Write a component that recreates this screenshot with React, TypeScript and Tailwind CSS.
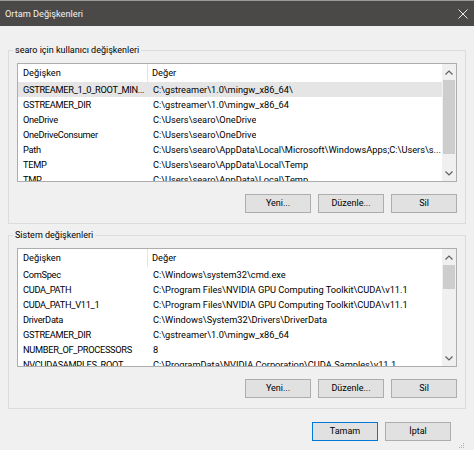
import React from "react";

type Row = { name: string; value: string; selected?: boolean };

const userVars: Row[] = [
  { name: "GSTREAMER_1_0_ROOT_MIN...", value: "C:\\gstreamer\\1.0\\mingw_x86_64\\", selected: true },
  { name: "GSTREAMER_DIR", value: "C:\\gstreamer\\1.0\\mingw_x86_64" },
  { name: "OneDrive", value: "C:\\Users\\searo\\OneDrive" },
  { name: "OneDriveConsumer", value: "C:\\Users\\searo\\OneDrive" },
  { name: "Path", value: "C:\\Users\\searo\\AppData\\Local\\Microsoft\\WindowsApps;C:\\Users\\s..." },
  { name: "TEMP", value: "C:\\Users\\searo\\AppData\\Local\\Temp" },
  { name: "TMP", value: "C:\\Users\\searo\\AppData\\Local\\Temp" },
];

const systemVars: Row[] = [
  { name: "ComSpec", value: "C:\\Windows\\system32\\cmd.exe" },
  { name: "CUDA_PATH", value: "C:\\Program Files\\NVIDIA GPU Computing Toolkit\\CUDA\\v11.1" },
  { name: "CUDA_PATH_V11_1", value: "C:\\Program Files\\NVIDIA GPU Computing Toolkit\\CUDA\\v11.1" },
  { name: "DriverData", value: "C:\\Windows\\System32\\Drivers\\DriverData" },
  { name: "GSTREAMER_DIR", value: "C:\\gstreamer\\1.0\\mingw_x86_64" },
  { name: "NUMBER_OF_PROCESSORS", value: "8" },
  { name: "NVCUDASAMPLES_ROOT", value: "C:\\ProgramData\\NVIDIA Corporation\\CUDA Samples\\v11.1" },
];

function Chevron({ up }: { up?: boolean }) {
  return (
    <svg width="8" height="5" viewBox="0 0 8 5">
      <polyline
        points={up ? "0.5,4.5 4,1 7.5,4.5" : "0.5,0.5 4,4 7.5,0.5"}
        fill="none"
        stroke="#606060"
        strokeWidth="1.2"
      />
    </svg>
  );
}

function VarList({ rows, thumb }: { rows: Row[]; thumb: string }) {
  return (
    <div className="mt-[5px] flex h-[119px] border border-[#adadad] bg-white text-[9.25px]">
      <div className="min-w-0 flex-1 overflow-hidden">
        {/* header */}
        <div className="flex h-[18px] items-center">
          <div className="h-full w-[130px] shrink-0 border-r border-[#e5e5e5] pl-[5px] leading-[18px]">Değişken</div>
          <div className="pl-[4px]">Değer</div>
        </div>
        {rows.map((r, i) => (
          <div
            key={i}
            className={`flex h-[15px] items-center whitespace-nowrap leading-[15px] ${r.selected ? "bg-[#e5e5e5]" : ""}`}
          >
            <div className="w-[131px] shrink-0 overflow-hidden pl-[5px] tracking-[-0.3px]">{r.name}</div>
            <div className="min-w-0 overflow-hidden pl-[4px]">{r.value}</div>
          </div>
        ))}
      </div>
      {/* scrollbar */}
      <div className="flex w-[14px] shrink-0 flex-col bg-[#f0f0f0]">
        <div className="flex h-[16px] items-center justify-center">
          <Chevron up />
        </div>
        <div className={`mx-[1px] bg-[#cdcdcd] ${thumb}`} />
        <div className="flex-1" />
        <div className="flex h-[16px] items-center justify-center">
          <Chevron />
        </div>
      </div>
    </div>
  );
}

function Button({ label, primary }: { label: string; primary?: boolean }) {
  return (
    <button
      className={`flex h-[19px] w-[66px] items-center justify-center border bg-[#e1e1e1] leading-none ${
        primary ? "border-[#0078d7]" : "border-[#adadad]"
      }`}
    >
      {label}
    </button>
  );
}

function Group({ title, rows, thumb }: { title: string; rows: Row[]; thumb: string }) {
  return (
    <fieldset className="min-w-0 border border-[#dcdcdc] px-2 pb-[10px]">
      <legend className="ml-[-4px] px-[2px] leading-[16px]">{title}</legend>
      <VarList rows={rows} thumb={thumb} />
      <div className="mt-[12px] flex justify-end gap-[7px]">
        <Button label="Yeni..." />
        <Button label="Düzenle..." />
        <Button label="Sil" />
      </div>
    </fieldset>
  );
}

export default function App() {
  return (
    <div
      className="flex h-[450px] w-[474px] flex-col overflow-hidden bg-[#f0f0f0] text-[9px] text-black"
      style={{ fontFamily: 'Roboto, "Noto Sans", sans-serif' }}
    >
      <div className="flex h-[26px] shrink-0 items-center justify-between border-t border-[#9a9a9a] bg-[#4a4947] pl-[5px] pr-[6px] text-[#f2f2f2]">
        <span className="text-[9.2px]">Ortam Değişkenleri</span>
        <svg width="10" height="10" viewBox="0 0 10 10">
          <path d="M0.5 0.5 L9.5 9.5 M9.5 0.5 L0.5 9.5" stroke="#e8e8e8" strokeWidth="1" />
        </svg>
      </div>

      <div className="flex min-h-0 flex-1 flex-col px-2 pt-4">
        <Group title="searo için kullanıcı değişkenleri" rows={userVars} thumb="h-[74px]" />
        <div className="mt-[3px]">
          <Group title="Sistem değişkenleri" rows={systemVars} thumb="h-[24px]" />
        </div>

        <div className="mt-[13px] flex items-start justify-end gap-[7px] pr-[15px]">
          <Button label="Tamam" primary />
          <Button label="İptal" />
        </div>
        <div className="flex flex-1 items-end justify-end">
          <svg width="6" height="6" viewBox="0 0 6 6" className="mb-[1px] mr-[1px]">
            <rect x="4" y="0" width="1" height="1" fill="#b0b0b0" />
            <rect x="2" y="2" width="1" height="1" fill="#b0b0b0" />
            <rect x="4" y="2" width="1" height="1" fill="#b0b0b0" />
            <rect x="0" y="4" width="1" height="1" fill="#b0b0b0" />
            <rect x="2" y="4" width="1" height="1" fill="#b0b0b0" />
            <rect x="4" y="4" width="1" height="1" fill="#b0b0b0" />
          </svg>
        </div>
      </div>
    </div>
  );
}
